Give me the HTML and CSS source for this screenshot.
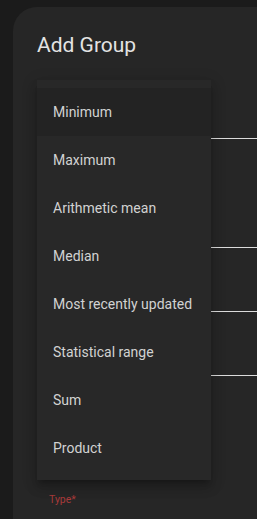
FILE: index.html
```html
<!DOCTYPE html>
<html lang="en">
<head>
  <meta charset="UTF-8">
  <title>Add Group</title>
  <link rel="stylesheet" href="styles.css">
</head>
<body>

  <div class="dialog">
    <h2 class="dialog-title">Add Group</h2>

    <div class="form">
      <div class="field field-name"></div>
      <div class="field field-entities"></div>
      <div class="field field-short"></div>
      <div class="field field-short"></div>
      <div class="select-field">
        <span class="select-label">Type*</span>
      </div>
    </div>

    <div class="menu">
      <div class="menu-item selected">Minimum</div>
      <div class="menu-item">Maximum</div>
      <div class="menu-item">Arithmetic mean</div>
      <div class="menu-item">Median</div>
      <div class="menu-item">Most recently updated</div>
      <div class="menu-item">Statistical range</div>
      <div class="menu-item">Sum</div>
      <div class="menu-item">Product</div>
    </div>
  </div>

</body>
</html>
```

FILE: styles.css
```css
html, body {
  overflow: hidden;
}

body {
  margin: 0;
  background-color: #1b1b1b;
  font-family: 'Roboto', 'Noto Sans', sans-serif;
  color: #e1e1e1;
  height: 519px;
}

.dialog {
  position: relative;
  margin: 7px 0 0 13px;
  width: 244px;
  height: 512px;
  background-color: #262626;
  border-radius: 24px 0 0 0;
  padding: 24px 0 0 24px;
  box-sizing: border-box;
}

.dialog-title {
  margin: 0;
  font-size: 21px;
  font-weight: 400;
  line-height: 28px;
  color: #e3e3e3;
}

.form {
  display: flex;
  flex-direction: column;
  padding-top: 24px;
}

.field {
  border-bottom: 1px solid #dcdcdc;
}

.field-name {
  height: 55px;
}

.field-entities {
  height: 108px;
}

.field-short {
  height: 63px;
}

.select-field {
  padding: 112px 0 0 12px;
}

.select-label {
  font-size: 10.5px;
  color: #a83a3a;
}

.menu {
  position: absolute;
  top: 73px;
  left: 24px;
  width: 174px;
  padding: 8px 0;
  background-color: #282828;
  box-shadow: 0 5px 5px -3px rgba(0, 0, 0, 0.2), 0 8px 10px 1px rgba(0, 0, 0, 0.14), 0 3px 14px 2px rgba(0, 0, 0, 0.12);
  display: flex;
  flex-direction: column;
}

.menu-item {
  height: 48px;
  line-height: 48px;
  padding: 0 16px;
  font-size: 14px;
  color: #d2d2d2;
  white-space: nowrap;
}

.menu-item.selected {
  background-color: #232323;
}
```
